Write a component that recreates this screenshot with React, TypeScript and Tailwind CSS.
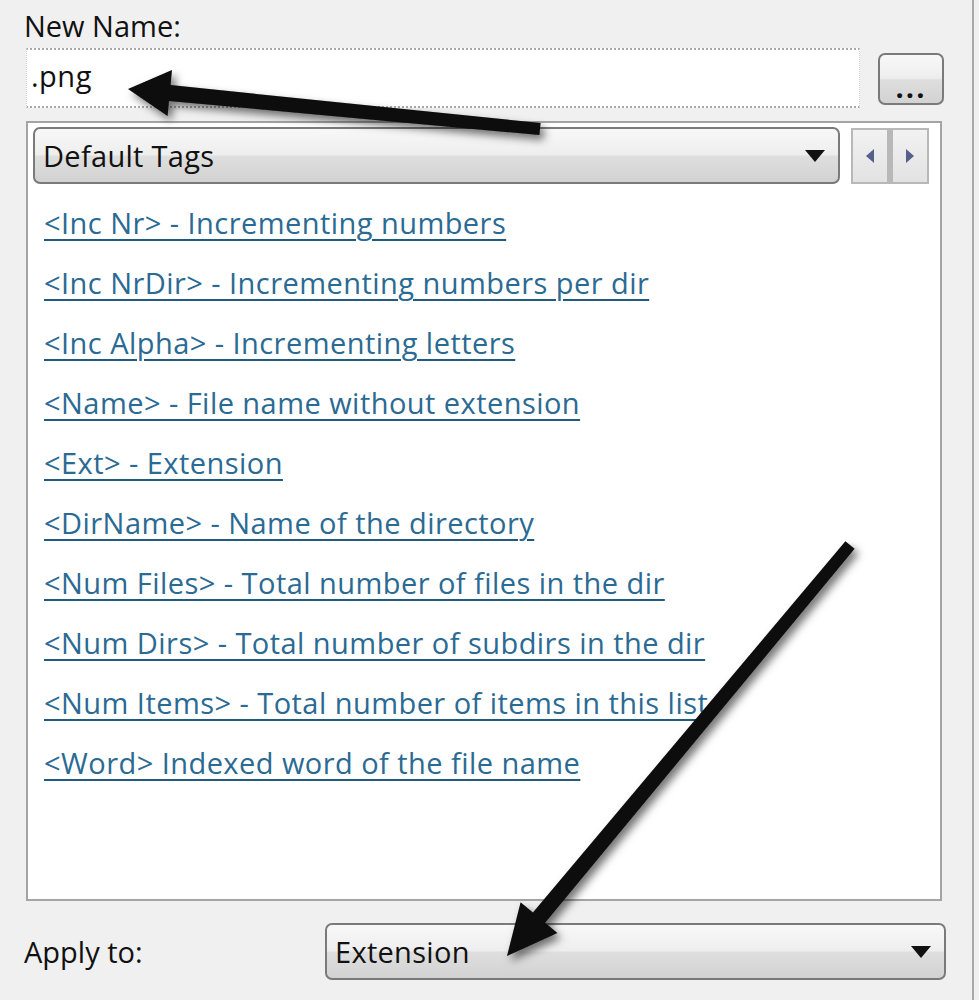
import React from "react";

const tags = [
  "<Inc Nr> - Incrementing numbers",
  "<Inc NrDir> - Incrementing numbers per dir",
  "<Inc Alpha> - Incrementing letters",
  "<Name> - File name without extension",
  "<Ext> - Extension",
  "<DirName> - Name of the directory",
  "<Num Files> - Total number of files in the dir",
  "<Num Dirs> - Total number of subdirs in the dir",
  "<Num Items> - Total number of items in this list",
  "<Word> Indexed word of the file name",
];

function DropArrow() {
  return (
    <svg width="22" height="14" viewBox="0 0 22 14" className="shrink-0">
      <path d="M1 1 L21 1 L11 13 Z" fill="#111" />
    </svg>
  );
}

function Combo({ label, className }: { label: string; className: string }) {
  return (
    <div
      className={`flex items-center justify-between rounded-[7px] border-2 border-[#7a7a7a] bg-[linear-gradient(to_bottom,#f8f8f8_0%,#eeeeee_48%,#dedede_52%,#d2d2d2_100%)] pl-[8px] pr-[12px] ${className}`}
    >
      <span className="text-[#111] tracking-[0.3px]">{label}</span>
      <DropArrow />
    </div>
  );
}

function Arrows() {
  return (
    <svg width="979" height="1000" className="absolute left-0 top-0 pointer-events-none">
      <defs>
        <filter id="sh" x="-20%" y="-20%" width="140%" height="140%">
          <feDropShadow dx="4" dy="5" stdDeviation="4" floodColor="#000" floodOpacity="0.55" />
        </filter>
      </defs>
      <polygon
        filter="url(#sh)"
        fill="#0a0a0a"
        points="128,89 172,70 170.6,85.1 540.6,123 539.4,135 169,101 167.6,116"
      />
      <polygon
        filter="url(#sh)"
        fill="#0a0a0a"
        points="507,956 520.6,902.2 532.9,912.5 845.4,541.2 854.6,548.8 545.1,922.7 557.4,933"
      />
    </svg>
  );
}

export default function App() {
  return (
    <div className="relative w-[979px] h-[1000px] bg-[#f0f0f0] font-['Open_Sans',sans-serif] text-[29px] text-[#111] overflow-hidden">
      <div className="w-[974px] h-full border-r-2 border-[#a8a8a8] pl-[24px] pt-[8px]">
        <div className="h-[40px] leading-[36px]">New Name:</div>

        <div className="flex items-start">
          <div className="ml-[2px] w-[834px] h-[60px] bg-white border-y-2 border-x border-[#a9a9a9] border-x-[#cfcfcf] border-dotted pl-[4px] leading-[52px] tracking-[0.5px]">
            .png
          </div>
          <div className="ml-[18px] mt-[5px] w-[66px] h-[52px] rounded-[7px] border-2 border-[#7a7a7a] bg-[linear-gradient(to_bottom,#f8f8f8_0%,#eeeeee_48%,#dedede_52%,#d2d2d2_100%)] flex items-end justify-center pb-[6px]">
            <span className="font-bold leading-[20px] tracking-[2px]">...</span>
          </div>
        </div>

        <div className="mt-[13px] ml-[2px] w-[916px] h-[780px] border-2 border-[#a4a4a4] bg-white">
          <div className="flex items-start pl-[5px] pt-[4px]">
            <Combo label="Default Tags" className="w-[807px] h-[57px]" />
            <div className="ml-[11px] mt-[1px] flex">
              <div className="w-[38px] h-[56px] border-2 border-[#b8b8b8] bg-[linear-gradient(to_bottom,#f2f2f2,#e2e2e2)] flex items-center justify-center">
                <svg width="10" height="16" viewBox="0 0 10 16">
                  <path d="M9 1 L1 8 L9 15 Z" fill="#55608a" />
                </svg>
              </div>
              <div className="w-[40px] h-[56px] border-2 border-l-[4px] border-[#b8b8b8] bg-[linear-gradient(to_bottom,#f2f2f2,#e2e2e2)] flex items-center justify-center">
                <svg width="10" height="16" viewBox="0 0 10 16">
                  <path d="M1 1 L9 8 L1 15 Z" fill="#55608a" />
                </svg>
              </div>
            </div>
          </div>

          <ul className="mt-[10px] ml-[16px]">
            {tags.map((t) => (
              <li key={t} className="h-[60px] leading-[58px]">
                <span className="text-[#2a6a93] tracking-[0.45px] underline decoration-2 decoration-[#1f5a80] underline-offset-[5px] whitespace-pre">
                  {t}
                </span>
              </li>
            ))}
          </ul>
        </div>

        <div className="mt-[22px] flex items-center">
          <div className="w-[301px]">Apply to:</div>
          <Combo label="Extension" className="w-[621px] h-[57px]" />
        </div>
      </div>
      <Arrows />
    </div>
  );
}
